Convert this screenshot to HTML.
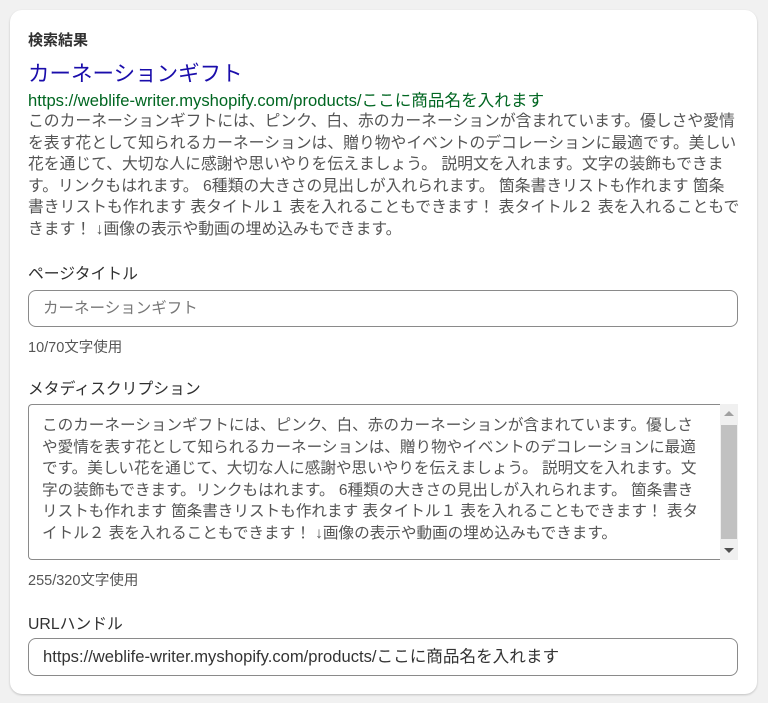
<!DOCTYPE html>
<html><head><meta charset="utf-8"><style>
body{margin:0;background:#f1f1f1;font-family:"Liberation Sans","Noto Sans CJK JP",sans-serif;width:768px;height:703px;overflow:hidden}
.card{position:absolute;left:10px;top:10px;width:747px;height:684px;background:#fff;border-radius:12px;box-shadow:0 1px 2px rgba(0,0,0,.2)}
.a{position:absolute;left:28px;white-space:nowrap}
.l{white-space:nowrap;height:21.6px;line-height:21.6px}
.inp{position:absolute;left:28px;width:710px;border:1px solid #8a8a8a;border-radius:8px;background:#fff;color:#555;font-size:15.5px;box-sizing:border-box;padding-left:14px}
</style></head><body>
<div class="card"></div>
<div class="a" style="top:29px;font-size:15px;font-weight:bold;color:#303030">検索結果</div>
<div class="a" style="top:57px;font-size:21.5px;color:#1a0dab">カーネーションギフト</div>
<div class="a" style="top:87px;font-size:16.6px;color:#006621">https://weblife-writer.myshopify.com/products/ここに商品名を入れます</div>
<div class="a" style="top:111px;font-size:15.8px;color:#545454">
<div class="l">このカーネーションギフトには、ピンク、白、赤のカーネーションが含まれています。優しさや愛情</div>
<div class="l">を表す花として知られるカーネーションは、贈り物やイベントのデコレーションに最適です。美しい</div>
<div class="l">花を通じて、大切な人に感謝や思いやりを伝えましょう。 説明文を入れます。文字の装飾もできま</div>
<div class="l">す。リンクもはれます。 6種類の大きさの見出しが入れられます。 箇条書きリストも作れます 箇条</div>
<div class="l">書きリストも作れます 表タイトル１ 表を入れることもできます！ 表タイトル２ 表を入れることもで</div>
<div class="l">きます！ ↓画像の表示や動画の埋め込みもできます。</div>
</div>
<div class="a" style="top:261px;font-size:15.8px;color:#303030">ページタイトル</div>
<div class="inp" style="top:290px;height:37px;line-height:35px;color:#777">カーネーションギフト</div>
<div class="a" style="top:336px;font-size:14.5px;color:#555">10/70文字使用</div>
<div class="a" style="top:376px;font-size:15.8px;color:#303030">メタディスクリプション</div>
<div style="position:absolute;left:28px;top:404px;width:710px;height:156px;border:1px solid #8a8a8a;border-right:none;box-sizing:border-box;background:#fff;border-radius:4px 0 0 4px"></div>
<div style="position:absolute;left:720px;top:404px;width:18px;height:156px;background:#f0f0f0"></div>
<div style="position:absolute;left:721px;top:425px;width:16px;height:114px;background:#c1c1c1"></div>
<div style="position:absolute;left:724px;top:411px;width:0;height:0;border:5px solid transparent;border-bottom:5px solid #a0a0a0;border-top:0"></div>
<div style="position:absolute;left:724px;top:548px;width:0;height:0;border:5px solid transparent;border-top:5px solid #505050;border-bottom:0"></div>
<div class="a" style="top:415px;left:42px;font-size:15.6px;color:#555">
<div class="l">このカーネーションギフトには、ピンク、白、赤のカーネーションが含まれています。優しさ</div>
<div class="l">や愛情を表す花として知られるカーネーションは、贈り物やイベントのデコレーションに最適</div>
<div class="l">です。美しい花を通じて、大切な人に感謝や思いやりを伝えましょう。 説明文を入れます。文</div>
<div class="l">字の装飾もできます。リンクもはれます。 6種類の大きさの見出しが入れられます。 箇条書き</div>
<div class="l">リストも作れます 箇条書きリストも作れます 表タイトル１ 表を入れることもできます！ 表タ</div>
<div class="l">イトル２ 表を入れることもできます！ ↓画像の表示や動画の埋め込みもできます。</div>
</div>
<div class="a" style="top:569px;font-size:14.5px;color:#555">255/320文字使用</div>
<div class="a" style="top:611px;font-size:15.8px;color:#303030">URLハンドル</div>
<div class="inp" style="top:638px;height:38px;line-height:36px;color:#333;font-size:16.6px">https://weblife-writer.myshopify.com/products/ここに商品名を入れます</div>
</body></html>
